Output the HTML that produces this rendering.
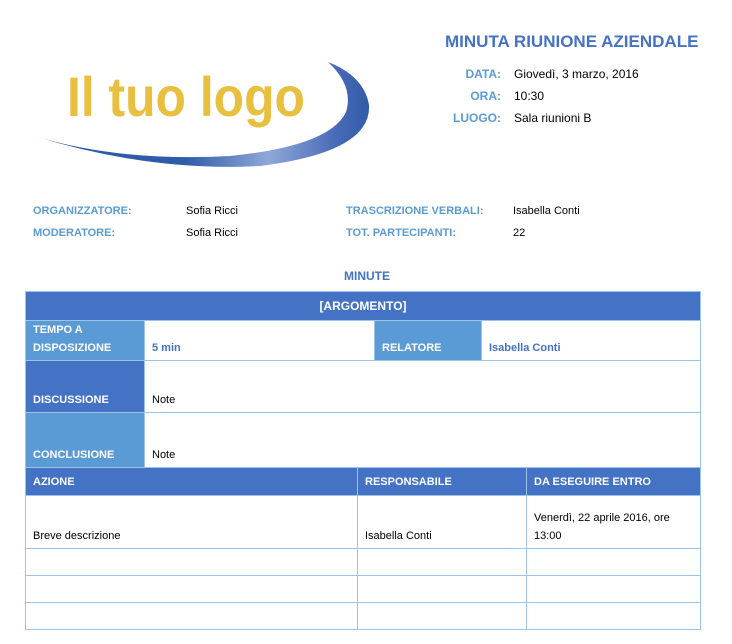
<!DOCTYPE html>
<html><head><meta charset="utf-8"><style>
body{margin:0;width:732px;height:644px;background:#fff;position:relative;font-family:"Liberation Sans",Arial,sans-serif;overflow:hidden}
.a{position:absolute;white-space:nowrap}
.lbl{color:#5b9bd5;font-weight:bold;font-size:11px}
.v{font-size:11px;color:#000}
.c{position:absolute;box-sizing:border-box;border:1px solid #9dc3e6;font-size:11px}
.d{background:#4472c4;color:#fff;font-weight:bold}
.l{background:#5b9bd5;color:#fff;font-weight:bold}
.t{position:absolute;left:7px;bottom:3px;line-height:18px}
</style></head><body>
<svg class="a" style="left:0;top:0" width="400" height="190">
<defs><linearGradient id="g" x1="0" x2="1"><stop offset="0" stop-color="#2f5ca8"/><stop offset="0.45" stop-color="#2f5ca8"/><stop offset="0.7" stop-color="#8fa8d8"/><stop offset="0.9" stop-color="#4a6ab8"/><stop offset="1" stop-color="#2f5ca8"/></linearGradient></defs>
<path d="M34,136 Q150,172 260,166 Q372,152 369,105 Q364,76 328,62 Q354,86 346,112 Q330,146 230,156 Q120,162 34,136 Z" fill="url(#g)"/>
<text x="67" y="116" font-family="Liberation Sans Narrow,Liberation Sans,sans-serif" font-weight="bold" font-size="56" fill="#e8bf3e" textLength="238" lengthAdjust="spacingAndGlyphs">Il tuo logo</text>
</svg>
<div class="a" style="left:445px;top:32px;font-size:17px;font-weight:bold;color:#4472c4">MINUTA RIUNIONE AZIENDALE</div>
<div class="a lbl" style="right:231px;top:67px;font-size:12px">DATA:</div>
<div class="a lbl" style="right:231px;top:89px;font-size:12px">ORA:</div>
<div class="a lbl" style="right:231px;top:111px;font-size:12px">LUOGO:</div>
<div class="a" style="left:514px;top:67px;font-size:12px">Giovedì, 3 marzo, 2016</div>
<div class="a" style="left:514px;top:89px;font-size:12px">10:30</div>
<div class="a" style="left:514px;top:111px;font-size:12px">Sala riunioni B</div>
<div class="a lbl" style="left:33px;top:205px">ORGANIZZATORE:</div>
<div class="a v" style="left:186px;top:205px">Sofia Ricci</div>
<div class="a lbl" style="left:346px;top:205px">TRASCRIZIONE VERBALI:</div>
<div class="a v" style="left:513px;top:205px">Isabella Conti</div>
<div class="a lbl" style="left:33px;top:227px">MODERATORE:</div>
<div class="a v" style="left:186px;top:227px">Sofia Ricci</div>
<div class="a lbl" style="left:346px;top:227px">TOT. PARTECIPANTI:</div>
<div class="a v" style="left:513px;top:227px">22</div>
<div class="a" style="left:344px;top:269px;font-size:12px;font-weight:bold;color:#4472c4">MINUTE</div>

<div class="c d" style="left:25px;top:291px;width:676px;height:30px;font-size:12px;text-align:center;line-height:28px">[ARGOMENTO]</div>
<div class="c l" style="left:25px;top:320px;width:120px;height:41px"><span class="t">TEMPO A<br>DISPOSIZIONE</span></div>
<div class="c" style="left:144px;top:320px;width:231px;height:41px;color:#4472c4;font-weight:bold"><span class="t">5 min</span></div>
<div class="c l" style="left:374px;top:320px;width:108px;height:41px"><span class="t">RELATORE</span></div>
<div class="c" style="left:481px;top:320px;width:220px;height:41px;color:#4472c4;font-weight:bold"><span class="t">Isabella Conti</span></div>
<div class="c d" style="left:25px;top:360px;width:120px;height:53px"><span class="t">DISCUSSIONE</span></div>
<div class="c" style="left:144px;top:360px;width:557px;height:53px"><span class="t">Note</span></div>
<div class="c l" style="left:25px;top:412px;width:120px;height:56px"><span class="t">CONCLUSIONE</span></div>
<div class="c" style="left:144px;top:412px;width:557px;height:56px"><span class="t">Note</span></div>
<div class="c d" style="left:25px;top:467px;width:333px;height:29px"><span class="t" style="bottom:4px">AZIONE</span></div>
<div class="c d" style="left:357px;top:467px;width:170px;height:29px"><span class="t" style="bottom:4px">RESPONSABILE</span></div>
<div class="c d" style="left:526px;top:467px;width:175px;height:29px"><span class="t" style="bottom:4px">DA ESEGUIRE ENTRO</span></div>
<div class="c" style="left:25px;top:495px;width:333px;height:54px"><span class="t">Breve descrizione</span></div>
<div class="c" style="left:357px;top:495px;width:170px;height:54px"><span class="t">Isabella Conti</span></div>
<div class="c" style="left:526px;top:495px;width:175px;height:54px"><span class="t">Venerdì, 22 aprile 2016, ore<br>13:00</span></div>
<div class="c" style="left:25px;top:548px;width:333px;height:28px"></div>
<div class="c" style="left:357px;top:548px;width:170px;height:28px"></div>
<div class="c" style="left:526px;top:548px;width:175px;height:28px"></div>
<div class="c" style="left:25px;top:575px;width:333px;height:28px"></div>
<div class="c" style="left:357px;top:575px;width:170px;height:28px"></div>
<div class="c" style="left:526px;top:575px;width:175px;height:28px"></div>
<div class="c" style="left:25px;top:602px;width:333px;height:28px"></div>
<div class="c" style="left:357px;top:602px;width:170px;height:28px"></div>
<div class="c" style="left:526px;top:602px;width:175px;height:28px"></div>
</body></html>
